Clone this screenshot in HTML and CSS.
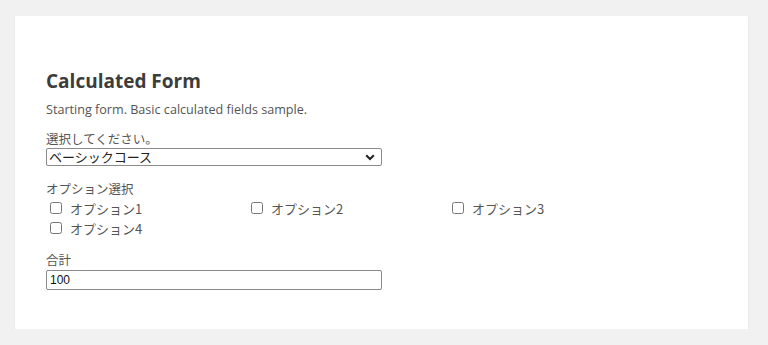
FILE: index.html
```html
<!DOCTYPE html>
<html lang="ja">
<head>
<meta charset="utf-8">
<link rel="stylesheet" href="styles.css">
</head>
<body>
<div class="card">
  <h1 class="title">Calculated Form</h1>
  <p class="desc">Starting form. Basic calculated fields sample.</p>
  <div class="field">
    <label class="label">選択してください。</label>
    <div class="select-wrap">
      <select class="select">
        <option>ベーシックコース</option>
      </select>
      <svg class="chev" width="10" height="7" viewBox="0 0 10 7"><path d="M1.2 1.3 L5 5 L8.8 1.3" fill="none" stroke="#222" stroke-width="2"/></svg>
    </div>
  </div>
  <div class="field field-gap">
    <div class="label">オプション選択</div>
    <div class="checks">
      <label class="check"><input type="checkbox"><span>オプション1</span></label>
      <label class="check"><input type="checkbox"><span>オプション2</span></label>
      <label class="check"><input type="checkbox"><span>オプション3</span></label>
      <label class="check"><input type="checkbox"><span>オプション4</span></label>
    </div>
  </div>
  <div class="field field-gap2">
    <label class="label">合計</label>
    <input class="text" type="text" value="100">
  </div>
</div>
</body>
</html>
```
FILE: styles.css
```css
html, body {
  margin: 0;
  padding: 0;
}
body {
  background: #f1f1f1;
  padding: 16px 20px 0 15px;
  font-family: "Open Sans", "Noto Sans CJK JP", sans-serif;
  color: #444;
}
.card {
  background: #fff;
  width: 733px;
  height: 313px;
  box-sizing: border-box;
  padding: 52px 31px 0 31px;
  box-shadow: 0 1px 2px rgba(0,0,0,0.08);
}
.title {
  margin: 0;
  font-size: 19px;
  font-weight: 700;
  line-height: 26px;
  color: #3c3c3c;
}
.desc {
  margin: 7px 0 0 0;
  font-size: 12.6px;
  line-height: 18px;
  color: #555;
}
.field {
  margin-top: 11px;
}
.field-gap {
  margin-top: 14px;
}
.field-gap2 {
  margin-top: 13px;
}
.label {
  display: block;
  font-family: "Noto Sans CJK JP", sans-serif;
  font-size: 12.5px;
  line-height: 17px;
  color: #555;
}
.select-wrap {
  position: relative;
  width: 336px;
  margin-top: 1px;
}
.select {
  display: block;
  box-sizing: border-box;
  width: 336px;
  height: 18px;
  margin: 0;
  padding: 0 0 0 2px;
  -webkit-appearance: none;
  appearance: none;
  font-family: "Noto Sans CJK JP", sans-serif;
  font-size: 13px;
  line-height: 16px;
  color: #222;
  border: 1px solid #8a8a8a;
  border-radius: 2px;
  background: #fff;
}
.chev {
  position: absolute;
  right: 7px;
  top: 6px;
  pointer-events: none;
}
.checks {
  display: grid;
  grid-template-columns: 201px 201px 201px;
  margin-top: 1px;
}
.check {
  display: flex;
  align-items: center;
  height: 20px;
  font-family: "Noto Sans CJK JP", sans-serif;
  font-size: 13px;
  color: #555;
}
.check input {
  width: 12px;
  height: 12px;
  margin: 0 8px 0 4px;
}
.text {
  display: block;
  box-sizing: border-box;
  width: 336px;
  height: 20px;
  margin: 2px 0 0 0;
  padding: 0 3px;
  font-family: "Liberation Sans", Arial, sans-serif;
  font-size: 12px;
  color: #111;
  border: 1px solid #8a8a8a;
  border-radius: 2px;
}
```
